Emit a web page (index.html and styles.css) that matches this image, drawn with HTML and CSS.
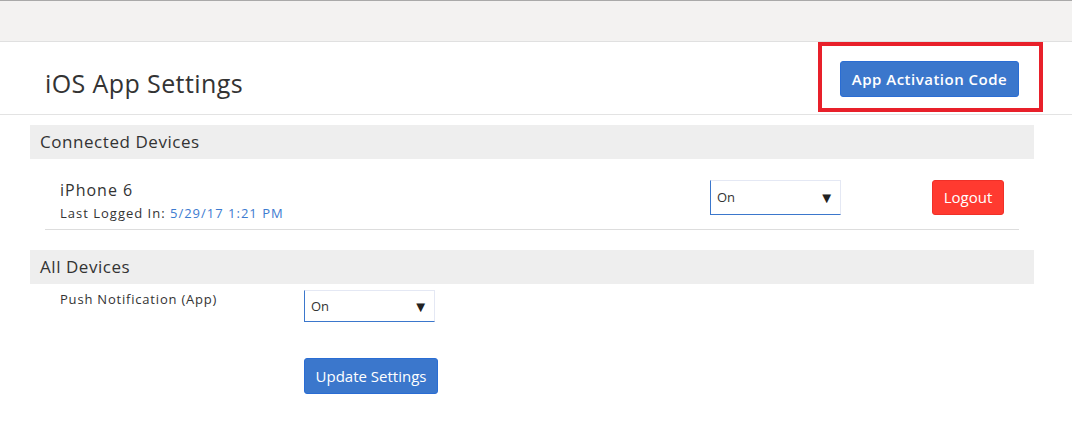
FILE: index.html
```html
<!DOCTYPE html>
<html>
<head>
<meta charset="utf-8">
<link rel="stylesheet" href="styles.css">
</head>
<body>
<div class="topbar"></div>
<div class="page-header">
  <h1 class="title">iOS App Settings</h1>
  <div class="highlight">
    <button class="btn btn-primary btn-activation">App Activation Code</button>
  </div>
</div>
<div class="content">
  <div class="section-head">Connected Devices</div>
  <div class="device-row">
    <div class="device-info">
      <div class="device-name">iPhone 6</div>
      <div class="device-meta">Last Logged In: <span class="date">5/29/17 1:21 PM</span></div>
    </div>
    <div class="select select-device"><span>On</span><span class="arrow">▼</span></div>
    <button class="btn btn-danger">Logout</button>
  </div>
  <div class="section-head section-gap">All Devices</div>
  <div class="form-row">
    <div class="form-label">Push Notification (App)</div>
    <div class="select select-form"><span>On</span><span class="arrow">▼</span></div>
  </div>
  <div class="form-actions">
    <button class="btn btn-primary btn-update">Update Settings</button>
  </div>
</div>
</body>
</html>
```
FILE: styles.css
```css
* { box-sizing: border-box; }
html, body { margin: 0; padding: 0; background: #fff; }
body {
  font-family: "Open Sans", "Noto Sans", sans-serif;
  color: #333;
}
.topbar {
  height: 42px;
  background: #f3f2f1;
  border-top: 1px solid #a9a9a9;
  border-bottom: 1px solid #e0e0e0;
}
.page-header {
  display: flex;
  justify-content: space-between;
  align-items: flex-start;
  height: 73px;
  border-bottom: 1px solid #e3e3e3;
  padding-left: 45px;
  padding-right: 29px;
}
.title {
  margin: 25px 0 0 0;
  font-size: 25px;
  font-weight: 400;
  letter-spacing: 0.4px;
  line-height: 32px;
}
.highlight {
  width: 225px;
  height: 70px;
  border: 4px solid #e8202a;
  display: flex;
  justify-content: center;
  padding-top: 15px;
  padding-right: 2px;
}
.btn {
  font-family: inherit;
  color: #fff;
  font-size: 15px;
  border-radius: 3px;
  cursor: pointer;
  padding: 0;
}
.btn-primary {
  background: #3b77cc;
  border: 1px solid #2a6dd4;
}
.btn-activation {
  width: 179px;
  height: 36px;
  font-weight: 600;
  letter-spacing: 0.5px;
}
.btn-danger {
  background: #ff3a30;
  border: 1px solid #f03028;
  width: 72px;
  height: 35px;
  margin-right: 15px;
}
.content {
  margin: 10px 38px 0 30px;
}
.section-head {
  height: 34px;
  background: #eeeeee;
  padding-left: 10px;
  font-size: 17px;
  letter-spacing: 0.55px;
  line-height: 34px;
}
.section-gap { margin-top: 20px; }
.device-row {
  display: flex;
  align-items: center;
  margin: 0 15px;
  height: 71px;
  border-bottom: 1px solid #dddddd;
  padding-left: 15px;
  padding-top: 6px;
}
.device-info {
  flex: 1;
  margin-top: 7px;
}
.device-name {
  font-size: 16px;
  letter-spacing: 1px;
  line-height: 22px;
}
.device-meta {
  font-size: 13px;
  letter-spacing: 1px;
  line-height: 20px;
  margin-top: 2px;
}
.date { color: #3d7bd0; }
.select {
  display: flex;
  align-items: center;
  justify-content: space-between;
  width: 131px;
  border: 1px solid #e4e8f4;
  border-left-color: #3b77cc;
  border-bottom-color: #3b77cc;
  padding: 0 6px 0 6px;
  font-size: 13px;
  background: #fff;
}
.select .arrow {
  font-size: 15px;
  color: #222;
}
.select-device {
  height: 35px;
  margin-right: 91px;
}
.form-row {
  display: flex;
  padding-left: 30px;
  padding-top: 6px;
}
.form-label {
  width: 244px;
  font-size: 13px;
  letter-spacing: 0.8px;
  line-height: 18px;
}
.select-form {
  height: 32px;
}
.form-actions {
  padding-left: 274px;
  margin-top: 36px;
}
.btn-update {
  width: 134px;
  height: 36px;
  font-size: 15px;
  font-weight: 500;
}
```
